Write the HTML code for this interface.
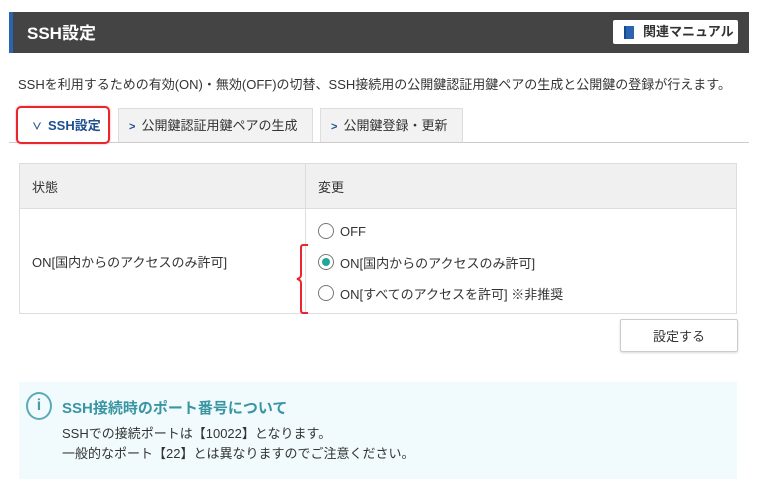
<!DOCTYPE html>
<html><head><meta charset="utf-8"><style>
*{margin:0;padding:0;box-sizing:border-box}
body{width:768px;height:479px;background:#fff;font-family:"Liberation Sans","Noto Sans CJK JP",sans-serif;color:#333;position:relative;overflow:hidden}
.abs{position:absolute}
.hdr{left:9px;top:12px;width:740px;height:41px;background:#444;border-left:4px solid #2a63b0}
.hdr .t{left:14px;top:7px;color:#fff;font-weight:bold;font-size:17px}
.man{left:613px;top:20px;width:125px;height:24px;background:#fff;border-radius:2px;font-size:13px;font-weight:bold;color:#333;padding:1px 0 0 30px}
.man i{position:absolute;left:11px;top:6px;width:10px;height:13px;background:#2a63b0;border-left:2px solid #174a8c}
.desc{left:18px;top:74px;font-size:13px;color:#333}
.tab{top:108px;height:34px;background:#f2f2f2;border:1px solid #ddd;border-bottom:none;font-size:13px;padding-top:6px;color:#333}
.tab b{color:#1d4f8f;font-size:11px;margin:0 6px 0 0}
.line{left:9px;top:142px;width:740px;height:1px;background:#ccc}
.act{left:16px;top:106px;width:94px;height:38px;border:2px solid #e8262b;border-radius:5px;background:#fff;font-size:13px;font-weight:bold;color:#1d4f8f;padding:7px 0 0 14px;box-shadow:0 0 2px rgba(232,38,43,.4)}
table{position:absolute;left:19px;top:163px;width:718px;border-collapse:collapse;font-size:13px}
td{border:1px solid #ddd;padding:0 12px;vertical-align:middle}
.th td{background:#f0f0f0;height:45px}
.rad{display:flex;align-items:center;height:31px}
.rc{width:16px;height:16px;border:1px solid #777;border-radius:50%;margin-right:6px;position:relative;background:#fff}
.rc.on:after{content:"";position:absolute;left:3px;top:3px;width:8px;height:8px;border-radius:50%;background:#1fa897}
.btn{left:620px;top:319px;width:118px;height:33px;border:1px solid #ccc;border-radius:2px;box-shadow:0 1px 2px rgba(0,0,0,.15);font-size:13px;text-align:center;padding-top:6px}
.info{left:19px;top:382px;width:718px;height:97px;background:#f1fbfd}
.ic{left:7px;top:10px;width:26px;height:28px;border:2px solid #5aaab8;border-radius:50%;color:#4a9aa8;font-weight:bold;text-align:center;font-size:16px;line-height:24px}
.it{left:43px;top:15px;color:#3a95a3;font-weight:bold;font-size:15px}
.il{left:43px;font-size:13px;color:#333}
</style></head><body>
<div class="abs hdr"><div class="abs t">SSH設定</div></div>
<div class="abs man"><i></i>関連マニュアル</div>
<div class="abs desc">SSHを利用するための有効(ON)・無効(OFF)の切替、SSH接続用の公開鍵認証用鍵ペアの生成と公開鍵の登録が行えます。</div>
<div class="abs line"></div>
<div class="abs tab" style="left:118px;width:195px;padding-left:10px"><b>&gt;</b>公開鍵認証用鍵ペアの生成</div>
<div class="abs tab" style="left:320px;width:143px;padding-left:10px"><b>&gt;</b>公開鍵登録・更新</div>
<div class="abs act"><span style="font-size:10px;margin-right:6px">&#8744;</span>SSH設定</div>
<table>
<tr class="th"><td style="width:286px">状態</td><td>変更</td></tr>
<tr><td style="height:105px">ON[国内からのアクセスのみ許可]</td><td style="padding-top:2px">
<div class="rad"><span class="rc"></span>OFF</div>
<div class="rad"><span class="rc on"></span>ON[国内からのアクセスのみ許可]</div>
<div class="rad"><span class="rc"></span>ON[すべてのアクセスを許可] ※非推奨</div>
</td></tr></table>
<svg class="abs" style="left:292px;top:243px" width="20" height="72"><path d="M16 2 H11 Q9 2 9 5 V32 Q9 35 5 36 Q9 37 9 40 V67 Q9 70 11 70 H16" fill="none" stroke="#e8262b" stroke-width="2"/></svg>
<div class="abs btn">設定する</div>
<div class="abs info">
<div class="abs ic">i</div>
<div class="abs it">SSH接続時のポート番号について</div>
<div class="abs il" style="top:41px">SSHでの接続ポートは【10022】となります。</div>
<div class="abs il" style="top:61px">一般的なポート【22】とは異なりますのでご注意ください。</div>
</div>
</body></html>
